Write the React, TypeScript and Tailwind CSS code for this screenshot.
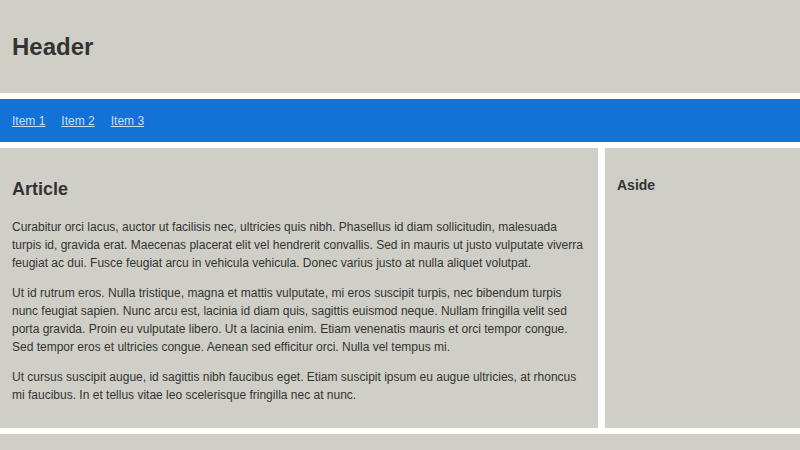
const paragraphs = [
  'Curabitur orci lacus, auctor ut facilisis nec, ultricies quis nibh. Phasellus id diam sollicitudin, malesuada turpis id, gravida erat. Maecenas placerat elit vel hendrerit convallis. Sed in mauris ut justo vulputate viverra feugiat ac dui. Fusce feugiat arcu in vehicula vehicula. Donec varius justo at nulla aliquet volutpat.',
  'Ut id rutrum eros. Nulla tristique, magna et mattis vulputate, mi eros suscipit turpis, nec bibendum turpis nunc feugiat sapien. Nunc arcu est, lacinia id diam quis, sagittis euismod neque. Nullam fringilla velit sed porta gravida. Proin eu vulputate libero. Ut a lacinia enim. Etiam venenatis mauris et orci tempor congue. Sed tempor eros et ultricies congue. Aenean sed efficitur orci. Nulla vel tempus mi.',
  'Ut cursus suscipit augue, id sagittis nibh faucibus eget. Etiam suscipit ipsum eu augue ultricies, at rhoncus mi faucibus. In et tellus vitae leo scelerisque fringilla nec at nunc.',
];

export default function App() {
  return (
    <div className="flex flex-col gap-[6px] bg-white text-[#333] font-['Liberation_Sans',Arial,sans-serif] w-[800px] h-[450px] overflow-hidden">
      <header className="h-[93px] shrink-0 bg-[#cfcfc7] flex items-center px-3">
        <h1 className="text-[24px] font-bold">Header</h1>
      </header>
      <nav className="h-[43px] shrink-0 bg-[#1372d6] flex items-center px-3 gap-4 text-[12px]">
        <a href="#" className="text-[#cfdcf2] underline">Item 1</a>
        <a href="#" className="text-[#cfdcf2] underline">Item 2</a>
        <a href="#" className="text-[#cfdcf2] underline">Item 3</a>
      </nav>
      <div className="h-[280px] shrink-0 flex gap-[7px]">
        <article className="w-[598px] bg-[#cfcfc7] px-3 pt-[31px]">
          <h2 className="text-[18px] font-bold leading-[21px] mb-[18px]">Article</h2>
          <div className="flex flex-col gap-3 text-[12px] leading-[18px]">
            {paragraphs.map((p, i) => (
              <p key={i}>{p}</p>
            ))}
          </div>
        </article>
        <aside className="flex-1 bg-[#cfcfc7] px-3 pt-[29px]">
          <h3 className="text-[14px] font-bold leading-[17px]">Aside</h3>
        </aside>
      </div>
      <footer className="h-[40px] shrink-0 bg-[#cfcfc7]" />
    </div>
  );
}
